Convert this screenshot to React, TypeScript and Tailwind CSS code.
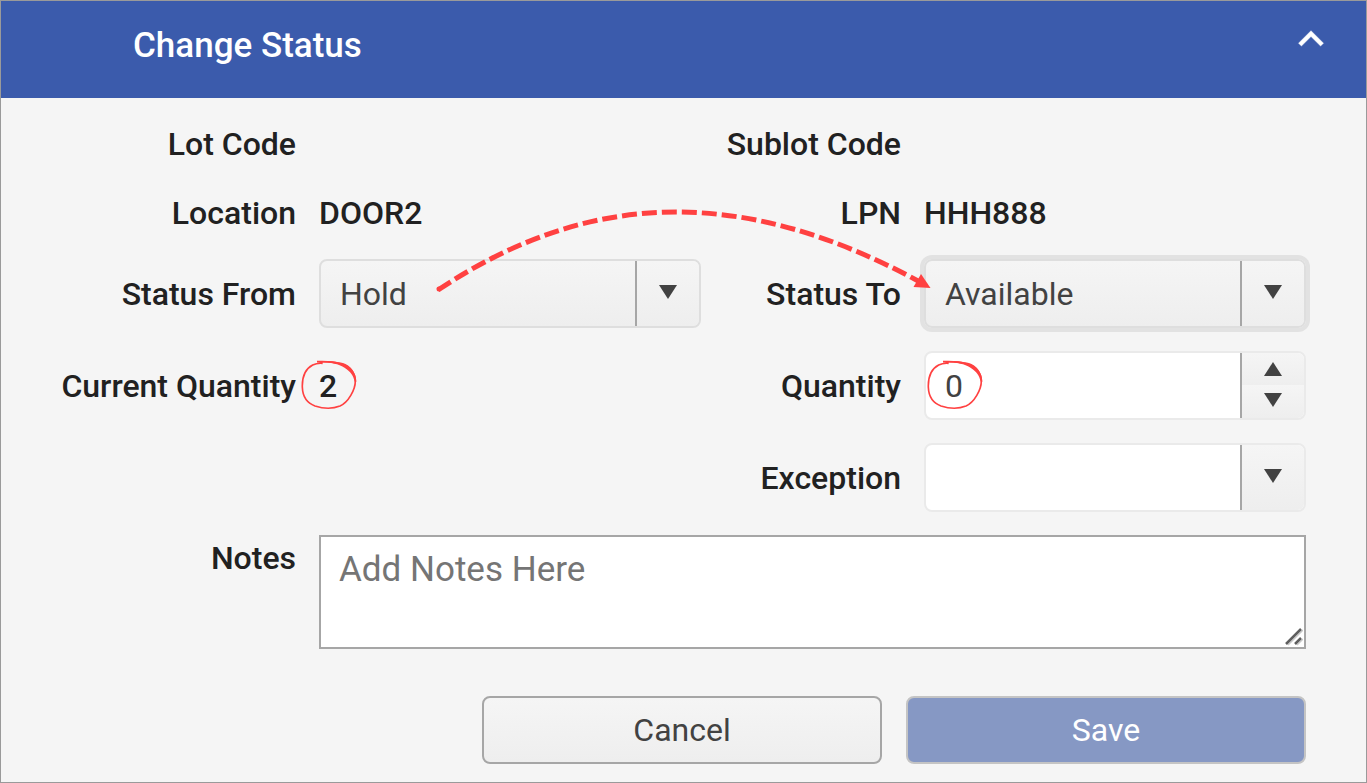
import { useState } from "react";
import type { ReactNode } from "react";

interface LabelProps {
  htmlFor?: string;
  children: ReactNode;
}

function Label({ htmlFor, children }: LabelProps) {
  const look = "text-right font-medium leading-[46px] whitespace-nowrap";
  // read-only values have no control to point at
  if (!htmlFor) return <span className={look}>{children}</span>;
  return (
    <label htmlFor={htmlFor} className={look}>
      {children}
    </label>
  );
}

function Triangle({ up }: { up?: boolean }) {
  return (
    <svg viewBox="0 0 18 14" className="h-[14px] w-[18px] fill-[#424242]" aria-hidden="true">
      <path d={up ? "M9 0 18 14H0Z" : "M0 0H18L9 14Z"} />
    </svg>
  );
}

interface SelectFieldProps {
  id: string;
  options: string[];
  variant?: "default" | "focused" | "empty";
}

function SelectField({ id, options, variant = "default" }: SelectFieldProps) {
  const [value, setValue] = useState(options[0]);
  const look = {
    default: "border-[#dedede] bg-linear-to-b from-[#f5f5f5] to-[#eeeeee]",
    focused:
      "border-[#dedede] bg-linear-to-b from-[#f5f5f5] to-[#eeeeee] ring-4 ring-[#e2e2e2]",
    empty: "border-[#eaeaea] bg-white",
  }[variant];

  return (
    <div className={`relative h-[69px] rounded-lg border-2 ${look}`}>
      <select
        id={id}
        value={value}
        onChange={(e) => setValue(e.target.value)}
        className="h-full w-full appearance-none bg-transparent pr-16 pl-[19px] text-[#424242] outline-none"
      >
        {options.map((option) => (
          <option key={option} value={option}>
            {option}
          </option>
        ))}
      </select>
      <span className="pointer-events-none absolute inset-y-0 right-0 flex w-16 items-center justify-center rounded-r-md border-l-2 border-[#a6a6a6] bg-linear-to-b from-[#f5f5f5] to-[#eeeeee] pb-[3px]">
        <Triangle />
      </span>
    </div>
  );
}

function HandCircle({ className }: { className: string }) {
  return (
    <svg
      viewBox="0 0 174 156"
      className={`pointer-events-none absolute h-[52px] w-[58px] ${className}`}
      aria-hidden="true"
    >
      <path
        d="M51 8C75 7 105 9 125 14C150 21 166 42 166 66C166 92 145 130 120 141C100 149 70 149 45 141C20 132 8 110 7 85C6 55 15 30 38 18C48 13 58 12 68 13"
        fill="none"
        stroke="#ff4141"
        strokeWidth="5"
      />
      <path
        d="M70 6C105 6 132 11 149 25C161 35 169 50 169 68L164 68C160 50 152 39 139 30C122 17 105 13 70 9Z"
        fill="#ff4141"
      />
    </svg>
  );
}

function StatusArrow() {
  return (
    <svg
      viewBox="430 200 504 100"
      className="pointer-events-none absolute top-[-59px] left-[-494px] z-10 h-[100px] w-[504px]"
      aria-hidden="true"
    >
      <circle cx="439" cy="289" r="2.5" fill="#ff4141" />
      <path
        d="M438 290C588 190 742 185 920 282"
        fill="none"
        stroke="#ff4141"
        strokeWidth="5"
        strokeDasharray="15 5"
      />
      <path d="M930.5 288 913.5 287 921 274Z" fill="#ff4141" />
    </svg>
  );
}

export default function App() {
  const [open, setOpen] = useState(true);
  const [quantity, setQuantity] = useState(0);

  return (
    <main className="min-h-screen border border-[#9a9a9a] bg-[#f5f5f5] font-[Roboto,sans-serif] text-[32px] text-[#212121]">
      <header className="flex items-start justify-between bg-[#3b5bac] pt-[13px] pr-[30px] pb-[20px] pl-[132px] text-white">
        <h1 className="text-[35px] leading-[64px] font-medium">Change Status</h1>
        <button type="button" aria-label="Toggle panel" onClick={() => setOpen(!open)}>
          <svg
            viewBox="0 0 24 24"
            className="size-[50px] fill-white stroke-white stroke-[0.2]"
            aria-hidden="true"
          >
            <path d="M12 8l-6 6 1.41 1.41L12 10.83l4.59 4.58L18 14z" />
          </svg>
        </button>
      </header>

      {open && (
        <form
          className="pt-[23px] pr-[60px] pb-[18px] pl-9"
          onSubmit={(e) => e.preventDefault()}
        >
          <div className="grid grid-cols-[259px_minmax(0,1fr)_177px_minmax(0,1fr)] items-center gap-[23px]">
            <Label>Lot Code</Label>
            <span />
            <Label>Sublot Code</Label>
            <span />

            <Label>Location</Label>
            <span className="leading-[46px] font-medium">DOOR2</span>
            <Label>LPN</Label>
            <span className="leading-[46px] font-medium">HHH888</span>

            <Label htmlFor="status-from">Status From</Label>
            <SelectField id="status-from" options={["Hold", "Available"]} />
            <Label htmlFor="status-to">Status To</Label>
            <div className="relative">
              <SelectField id="status-to" options={["Available", "Hold"]} variant="focused" />
              <StatusArrow />
            </div>

            <Label>Current Quantity</Label>
            <div className="relative flex h-[69px] items-center font-medium">
              2
              <HandCircle className="top-2 left-[-19px]" />
            </div>
            <Label htmlFor="quantity">Quantity</Label>
            <div className="relative flex h-[69px] rounded-lg border-2 border-[#eaeaea] bg-white">
              <input
                id="quantity"
                type="number"
                value={quantity}
                onChange={(e) => setQuantity(Number(e.target.value))}
                className="min-w-0 flex-1 [appearance:textfield] bg-transparent pl-[19px] text-[#424242] outline-none"
              />
              <div className="flex w-16 flex-col overflow-hidden rounded-r-md border-l-2 border-[#a6a6a6]">
                <button
                  type="button"
                  aria-label="Increase"
                  onClick={() => setQuantity(quantity + 1)}
                  className="flex flex-1 items-center justify-center bg-linear-to-b from-[#f5f5f5] to-[#eeeeee]"
                >
                  <Triangle up />
                </button>
                <button
                  type="button"
                  aria-label="Decrease"
                  onClick={() => setQuantity(Math.max(0, quantity - 1))}
                  className="flex flex-1 items-center justify-center bg-linear-to-b from-[#f5f5f5] to-[#eeeeee] pb-0.5"
                >
                  <Triangle />
                </button>
              </div>
              <HandCircle className="top-1.5 left-0" />
            </div>

            <div className="col-start-3 flex flex-col">
              <Label htmlFor="exception">Exception</Label>
            </div>
            <SelectField id="exception" options={[""]} variant="empty" />

            <div className="flex flex-col self-start">
              <Label htmlFor="notes">Notes</Label>
            </div>
            <div className="relative col-span-3 flex">
              <textarea
                id="notes"
                placeholder="Add Notes Here"
                className="h-[114px] w-full resize-none border-2 border-[#a6a6a6] bg-white px-[18px] py-2 text-[35px] leading-[50px] outline-none placeholder:text-[#757575]"
              />
              <svg
                viewBox="0 0 18 18"
                className="pointer-events-none absolute right-[3px] bottom-[3px] size-[18px]"
                fill="none"
                aria-hidden="true"
              >
                <path d="M3 17 18 2M12 17 18 11" stroke="#c8c8c8" strokeWidth="1.5" />
                <path d="M1 16 16 1M10 16 16 10" stroke="#5e5e5e" strokeWidth="2.5" />
              </svg>
            </div>
          </div>

          <div className="mt-[47px] flex justify-end gap-6">
            <button
              type="button"
              className="h-[68px] w-[400px] rounded-lg border-2 border-[#a6a6a6] bg-linear-to-b from-[#f5f5f5] to-[#eeeeee] text-[#424242]"
            >
              Cancel
            </button>
            <button
              type="submit"
              disabled
              className="h-[68px] w-[400px] rounded-lg border-2 border-[#c4c4c4] bg-[#8698c4] text-white"
            >
              Save
            </button>
          </div>
        </form>
      )}
    </main>
  );
}
